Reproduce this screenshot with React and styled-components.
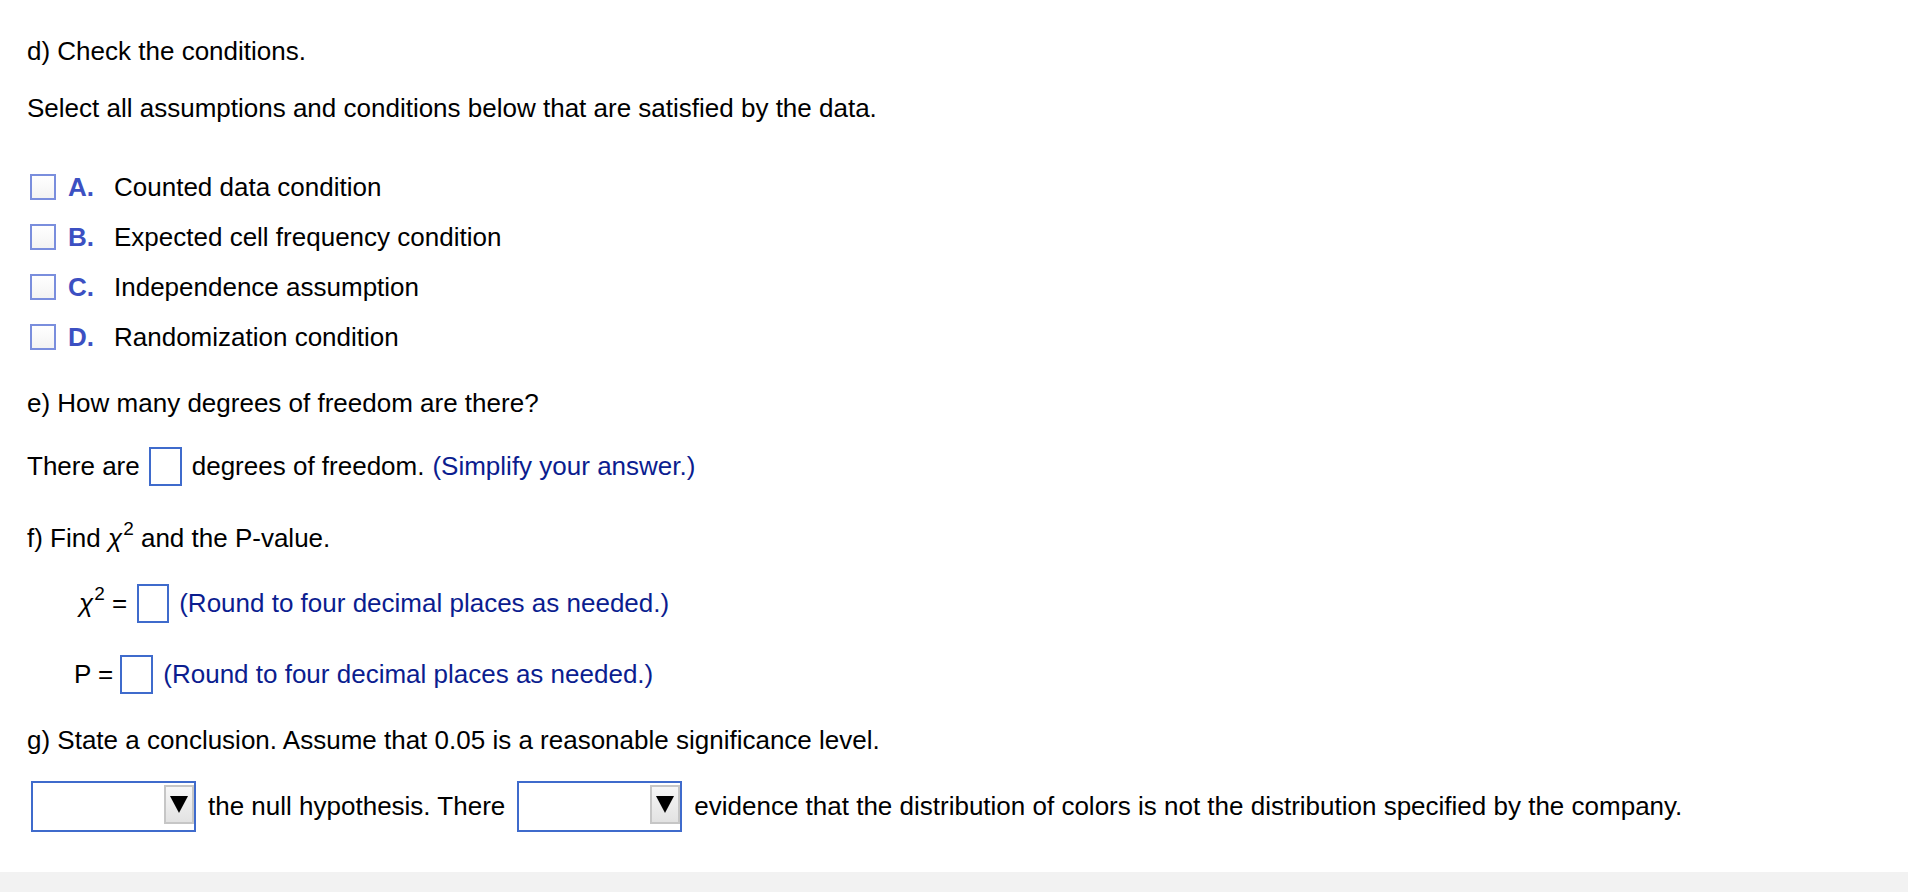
import styled, { createGlobalStyle } from "styled-components";

const options = [
  { letter: "A.", text: "Counted data condition" },
  { letter: "B.", text: "Expected cell frequency condition" },
  { letter: "C.", text: "Independence assumption" },
  { letter: "D.", text: "Randomization condition" },
];

export default function App() {
  return (
    <>
      <GlobalStyle />
      <Content>
        <Line>d) Check the conditions.</Line>
        <Line $top={27}>
          Select all assumptions and conditions below that are satisfied by the
          data.
        </Line>

        <OptionList>
          {options.map((o) => (
            <OptionRow key={o.letter}>
              <CheckBox />
              <Letter>{o.letter}</Letter>
              <span>{o.text}</span>
            </OptionRow>
          ))}
        </OptionList>

        <Line $top={26}>e) How many degrees of freedom are there?</Line>
        <AnswerRow $top={29}>
          <span>There are</span>
          <AnswerBox $gap={9} />
          <span>degrees of freedom.</span>
          <Hint $after="text">(Simplify your answer.)</Hint>
        </AnswerRow>

        <Line $top={37}>
          f) Find <Chi>χ</Chi>
          <Sup>2</Sup> and the P-value.
        </Line>
        <AnswerRow $top={31} $indent={52}>
          <span>
            <Chi>χ</Chi>
            <Sup>2</Sup> =
          </span>
          <AnswerBox $gap={10} $width={28} />
          <Hint>(Round to four decimal places as needed.)</Hint>
        </AnswerRow>
        <AnswerRow $top={32} $indent={47}>
          <span>P =</span>
          <AnswerBox $gap={7} $width={29} />
          <Hint>(Round to four decimal places as needed.)</Hint>
        </AnswerRow>

        <Line $top={31}>
          g) State a conclusion. Assume that 0.05 is a reasonable significance
          level.
        </Line>
        <DropRow>
          <Dropdown>
            <DropButton>
              <Arrow />
            </DropButton>
          </Dropdown>
          <span>the null hypothesis. There</span>
          <Dropdown>
            <DropButton>
              <Arrow />
            </DropButton>
          </Dropdown>
          <span>
            evidence that the distribution of colors is not the distribution
            specified by the company.
          </span>
        </DropRow>
      </Content>
      <Footer />
    </>
  );
}

const GlobalStyle = createGlobalStyle`
  body {
    margin: 0;
    background: #ffffff;
    color: #000000;
    font-family: "Liberation Sans", Arial, sans-serif;
    font-size: 26px;
  }
`;

const Content = styled.div`
  padding: 36px 0 40px 27px;
`;

const Line = styled.div`
  line-height: 30px;
  height: 30px;
  margin-top: ${(p) => p.$top || 0}px;
  white-space: nowrap;
`;

const OptionList = styled.div`
  margin-top: 39px;
  display: flex;
  flex-direction: column;
`;

const OptionRow = styled.div`
  display: flex;
  align-items: center;
  height: 50px;
  padding-left: 3px;
`;

const CheckBox = styled.span`
  width: 22px;
  height: 22px;
  border: 2px solid #7a8edd;
  background: linear-gradient(#ffffff, #f3f3f3);
  margin-right: 12px;
  flex-shrink: 0;
`;

const Letter = styled.span`
  width: 46px;
  font-weight: bold;
  color: #3c50c2;
`;

const AnswerRow = styled.div`
  display: flex;
  align-items: center;
  height: 39px;
  margin-top: ${(p) => p.$top || 0}px;
  padding-left: ${(p) => p.$indent || 0}px;
  white-space: nowrap;
`;

const AnswerBox = styled.span`
  width: ${(p) => p.$width || 29}px;
  height: 35px;
  border: 2px solid #3f6bcc;
  background: #ffffff;
  margin: 0 10px 0 ${(p) => p.$gap}px;
  flex-shrink: 0;
`;

const Hint = styled.span`
  color: #0b1d8f;
  margin-left: ${(p) => (p.$after === "text" ? 8 : 0)}px;
`;

const Chi = styled.span`
  font-style: italic;
`;

const Sup = styled.span`
  font-size: 19px;
  position: relative;
  top: -12px;
  margin-left: 1px;
`;

const DropRow = styled.div`
  display: flex;
  align-items: center;
  gap: 12px;
  margin-top: 26px;
  padding-left: 4px;
  white-space: nowrap;
`;

const Dropdown = styled.div`
  width: 161px;
  height: 47px;
  border: 2px solid #3f6bcc;
  background: #ffffff;
  display: flex;
  align-items: center;
  justify-content: flex-end;
  flex-shrink: 0;
`;

const DropButton = styled.div`
  width: 26px;
  height: 35px;
  border: 2px solid #c6c6c6;
  background: linear-gradient(#f7f7f7, #e2e2e2);
  display: flex;
  align-items: center;
  justify-content: center;
  margin-top: -4px;
`;

const Arrow = styled.span`
  width: 0;
  height: 0;
  border-left: 9px solid transparent;
  border-right: 9px solid transparent;
  border-top: 17px solid #000000;
`;

const Footer = styled.div`
  height: 40px;
  background: #f2f2f2;
`;
